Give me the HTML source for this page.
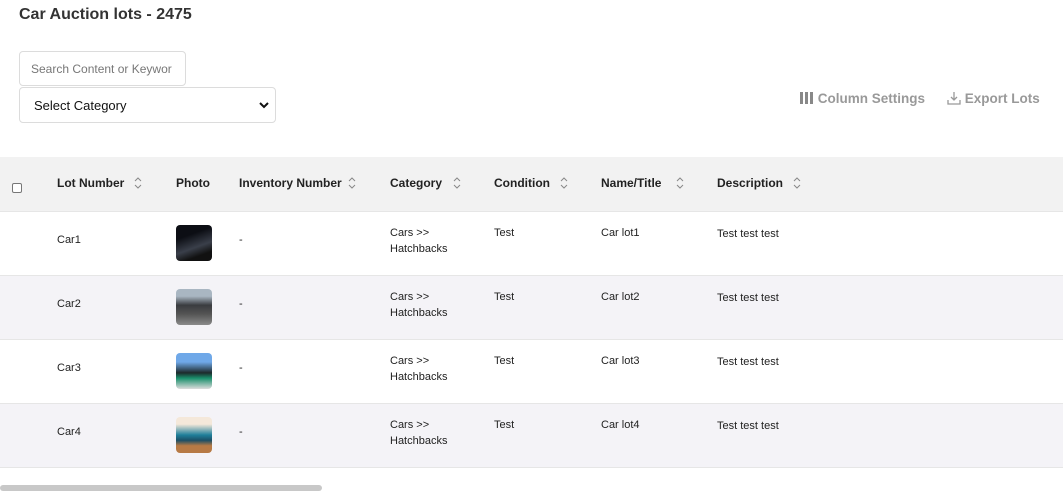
<!DOCTYPE html>
<html><head><style>
body{margin:0;width:1063px;height:492px;background:#fff;font-family:"Liberation Sans",sans-serif;position:relative;overflow:hidden;color:#222}
.abs{position:absolute}
h1{position:absolute;left:19px;top:6px;margin:0;font-size:16px;font-weight:bold;color:#333}
.search{left:19px;top:51px;width:167px;height:35px;border:1px solid #dcdcdc;border-radius:4px;box-sizing:border-box;font-size:12px;color:#777;padding:10px 11px;white-space:nowrap;overflow:hidden}
.sel{left:19px;top:87px;width:257px;height:36px;border:1px solid #dcdcdc;border-radius:4px;box-sizing:border-box;font-size:13px;color:#111;padding:10px 14px}
.tool{top:91px;font-size:13.5px;color:#999;font-weight:bold}
.hdr{left:0;top:157px;width:1063px;height:54px;background:#f2f2f2;border-bottom:1px solid #e6e6e6}
.th{top:176px;font-size:12px;font-weight:bold;color:#222}
.row{left:0;width:1063px;height:63px;border-bottom:1px solid #e6e6e6}
.td{font-size:11px;color:#222;line-height:16px}
.ph{width:36px;height:36px;border-radius:4px}
</style></head><body>
<h1>Car Auction lots - 2475</h1>
<div class="abs search">Search Content or Keywor</div>
<div class="abs sel">Select Category<svg class="abs" style="right:6px;top:13px" width="10" height="8" viewBox="0 0 10 8"><path d="M1 2l4 4 4-4" stroke="#111" stroke-width="2" fill="none"/></svg></div>
<div class="abs tool" style="left:800px"><svg width="14" height="12" style="vertical-align:-1px"><rect x="0" y="0" width="3" height="12" fill="#888"/><rect x="5" y="0" width="3" height="12" fill="#888"/><rect x="10" y="0" width="3" height="12" fill="#888"/></svg> Column Settings</div>
<div class="abs tool" style="left:947px"><svg width="14" height="14" style="vertical-align:-2px" fill="none" stroke="#999" stroke-width="1.3"><path d="M7 1v8M4 6l3 3 3-3M1 9v4h12V9"/></svg> Export Lots</div>
<div class="abs hdr"></div>
<div class="abs" style="left:12px;top:183px;width:10px;height:10px;box-shadow:inset 0 0 0 1px #777;border-radius:2px;background:#fff"></div>
<div class="abs th" style="left:57px">Lot Number</div>
<div class="abs th" style="left:176px">Photo</div>
<div class="abs th" style="left:239px">Inventory Number</div>
<div class="abs th" style="left:390px">Category</div>
<div class="abs th" style="left:494px">Condition</div>
<div class="abs th" style="left:601px">Name/Title</div>
<div class="abs th" style="left:717px">Description</div>
<svg class="abs" style="left:134px;top:177px" width="8" height="12"><path d="M1 4l3-3 3 3M1 8l3 3 3-3" stroke="#888" fill="none"/></svg>
<svg class="abs" style="left:348px;top:177px" width="8" height="12"><path d="M1 4l3-3 3 3M1 8l3 3 3-3" stroke="#888" fill="none"/></svg>
<svg class="abs" style="left:453px;top:177px" width="8" height="12"><path d="M1 4l3-3 3 3M1 8l3 3 3-3" stroke="#888" fill="none"/></svg>
<svg class="abs" style="left:560px;top:177px" width="8" height="12"><path d="M1 4l3-3 3 3M1 8l3 3 3-3" stroke="#888" fill="none"/></svg>
<svg class="abs" style="left:676px;top:177px" width="8" height="12"><path d="M1 4l3-3 3 3M1 8l3 3 3-3" stroke="#888" fill="none"/></svg>
<svg class="abs" style="left:793px;top:177px" width="8" height="12"><path d="M1 4l3-3 3 3M1 8l3 3 3-3" stroke="#888" fill="none"/></svg>

<div class="abs row" style="top:212px;background:#fff"></div>
<div class="abs row" style="top:276px;background:#f4f3f7"></div>
<div class="abs row" style="top:340px;background:#fff"></div>
<div class="abs row" style="top:404px;background:#f4f3f7"></div>

<div class="abs td" style="left:57px;top:232px">Car1</div>
<div class="abs ph" style="left:176px;top:225px;background:linear-gradient(160deg,#0c0e14 30%,#3a3f4a 60%,#111 80%)"></div>
<div class="abs td" style="left:239px;top:232px">-</div>
<div class="abs td" style="left:390px;top:225px">Cars &gt;&gt;<br>Hatchbacks</div>
<div class="abs td" style="left:494px;top:225px">Test</div>
<div class="abs td" style="left:601px;top:225px">Car lot1</div>
<div class="abs td" style="left:717px;top:226px">Test test test</div>

<div class="abs td" style="left:57px;top:296px">Car2</div>
<div class="abs ph" style="left:176px;top:289px;background:linear-gradient(180deg,#a9b6c2 20%,#3a3c40 45%,#555 70%,#8a8a8a)"></div>
<div class="abs td" style="left:239px;top:296px">-</div>
<div class="abs td" style="left:390px;top:289px">Cars &gt;&gt;<br>Hatchbacks</div>
<div class="abs td" style="left:494px;top:289px">Test</div>
<div class="abs td" style="left:601px;top:289px">Car lot2</div>
<div class="abs td" style="left:717px;top:290px">Test test test</div>

<div class="abs td" style="left:57px;top:360px">Car3</div>
<div class="abs ph" style="left:176px;top:353px;background:linear-gradient(180deg,#6fa8e8 25%,#1d2a2c 55%,#1a8f6c 70%,#ddd)"></div>
<div class="abs td" style="left:239px;top:360px">-</div>
<div class="abs td" style="left:390px;top:353px">Cars &gt;&gt;<br>Hatchbacks</div>
<div class="abs td" style="left:494px;top:353px">Test</div>
<div class="abs td" style="left:601px;top:353px">Car lot3</div>
<div class="abs td" style="left:717px;top:354px">Test test test</div>

<div class="abs td" style="left:57px;top:424px">Car4</div>
<div class="abs ph" style="left:176px;top:417px;background:linear-gradient(180deg,#f4e8da 20%,#1f7f9a 50%,#1c4f66 65%,#b77a45 80%)"></div>
<div class="abs td" style="left:239px;top:424px">-</div>
<div class="abs td" style="left:390px;top:417px">Cars &gt;&gt;<br>Hatchbacks</div>
<div class="abs td" style="left:494px;top:417px">Test</div>
<div class="abs td" style="left:601px;top:417px">Car lot4</div>
<div class="abs td" style="left:717px;top:418px">Test test test</div>

<div class="abs" style="left:0;top:485px;width:322px;height:6px;border-radius:3px;background:#c8c8c8"></div>
</body></html>
